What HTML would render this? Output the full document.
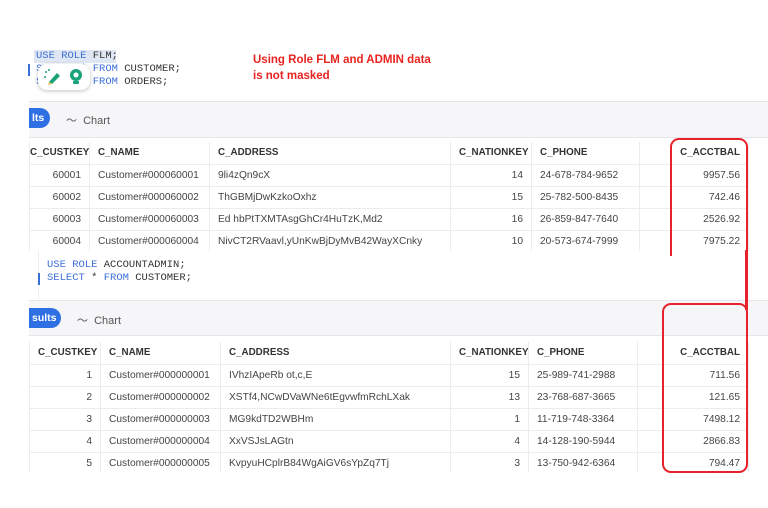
<!DOCTYPE html>
<html><head><meta charset="utf-8"><style>
*{margin:0;padding:0;box-sizing:border-box}
body{width:768px;height:508px;background:#fff;position:relative;overflow:hidden;font-family:"Liberation Sans",sans-serif}
.a{position:absolute}
.sql{font-family:"Liberation Mono",monospace;font-size:10.5px;color:#333;white-space:pre;line-height:13px}
.kw{color:#3b6fd8}
.band{background:#f6f6f8;border-top:1px solid #e6e6ea;border-bottom:1px solid #e6e6ea}
.pill{background:#2f6fe4;color:#fff;font-weight:bold;font-size:10.5px;border-radius:0 10px 10px 0;line-height:20px;padding-left:3px}
.chart{font-size:11px;color:#555}
table{border-collapse:collapse;font-size:10.2px;color:#444;background:#fff;table-layout:fixed}
td,th{border:1px solid #ececef;height:22px;padding:0 8px;white-space:nowrap;overflow:hidden}
th{font-weight:bold;color:#333;text-align:left;font-size:9.8px}
td.r,th.r{text-align:right}
table tr:first-child th{border-top:none}
.red{border:2.5px solid #e8212b;border-radius:9px}
</style></head><body>

<div class="a" style="left:34px;top:50px;width:82px;height:13px;background:#dfe6f3"></div>
<div class="a" style="left:28px;top:64px;width:2px;height:12px;background:#3b6fd8"></div>
<div class="a sql" style="left:36px;top:50px"><span class="kw">USE ROLE</span> FLM;
<span class="kw">SELECT *</span> <span class="kw">FROM</span> CUSTOMER;
<span class="kw">SELECT *</span> <span class="kw">FROM</span> ORDERS;</div>
<div class="a" style="left:38px;top:64px;width:52px;height:26px;background:#fff;border-radius:9px;box-shadow:0 1px 4px rgba(0,0,0,.25)"></div>
<svg class="a" style="left:43px;top:68px" width="20" height="18" viewBox="0 0 20 18"><circle cx="3" cy="4" r="1" fill="#1aa37a"/><circle cx="6" cy="2" r="1" fill="#1aa37a"/><circle cx="2" cy="9" r="1" fill="#1aa37a"/><path d="M6 14 L14 5 L17 8 L9 16 Z" fill="#1aa37a"/><path d="M6 14 L5 17 L9 16Z" fill="#f2c94c"/></svg>
<svg class="a" style="left:68px;top:68px" width="16" height="18" viewBox="0 0 16 18"><circle cx="8" cy="7" r="6" fill="#1aa37a"/><circle cx="8" cy="7" r="2.5" fill="#fff"/><rect x="5" y="13" width="6" height="3" rx="1" fill="#1aa37a"/></svg>
<div class="a" style="left:253px;top:52px;color:#e8231f;font-weight:bold;font-size:11.5px;line-height:16px">Using Role FLM and ADMIN data<br>is not masked</div>

<div class="a band" style="left:29px;top:101px;width:739px;height:37px"></div>
<div class="a pill" style="left:29px;top:108px;width:21px">lts</div>
<div class="a chart" style="left:66px;top:112px">〜&nbsp; Chart</div>

<table class="a" style="left:29px;top:142px;width:719px">
<colgroup><col style="width:60px"><col style="width:120px"><col style="width:241px"><col style="width:81px"><col style="width:108px"><col style="width:109px"></colgroup>
<tr><th style="padding-left:0">C_CUSTKEY</th><th>C_NAME</th><th>C_ADDRESS</th><th class="r">C_NATIONKEY</th><th>C_PHONE</th><th class="r">C_ACCTBAL</th></tr>
<tr><td class="r">60001</td><td>Customer#000060001</td><td>9li4zQn9cX</td><td class="r">14</td><td>24-678-784-9652</td><td class="r">9957.56</td></tr>
<tr><td class="r">60002</td><td>Customer#000060002</td><td>ThGBMjDwKzkoOxhz</td><td class="r">15</td><td>25-782-500-8435</td><td class="r">742.46</td></tr>
<tr><td class="r">60003</td><td>Customer#000060003</td><td>Ed hbPtTXMTAsgGhCr4HuTzK,Md2</td><td class="r">16</td><td>26-859-847-7640</td><td class="r">2526.92</td></tr>
<tr><td class="r">60004</td><td>Customer#000060004</td><td>NivCT2RVaavl,yUnKwBjDyMvB42WayXCnky</td><td class="r">10</td><td>20-573-674-7999</td><td class="r">7975.22</td></tr>
</table>
<div class="a" style="left:0;top:251px;width:768px;height:48px;background:#fff"></div>
<div class="a" style="left:38px;top:251px;width:1px;height:48px;background:#eee"></div>

<div class="a" style="left:38px;top:273px;width:2px;height:12px;background:#3b6fd8"></div>
<div class="a sql" style="left:47px;top:259px"><span class="kw">USE ROLE</span> ACCOUNTADMIN;
<span class="kw">SELECT</span> * <span class="kw">FROM</span> CUSTOMER;</div>

<div class="a band" style="left:29px;top:300px;width:739px;height:36px"></div>
<div class="a pill" style="left:29px;top:308px;width:32px">sults</div>
<div class="a chart" style="left:77px;top:312px">〜&nbsp; Chart</div>

<table class="a" style="left:29px;top:342px;width:719px">
<colgroup><col style="width:71px"><col style="width:120px"><col style="width:230px"><col style="width:78px"><col style="width:109px"><col style="width:111px"></colgroup>
<tr><th>C_CUSTKEY</th><th>C_NAME</th><th>C_ADDRESS</th><th class="r">C_NATIONKEY</th><th>C_PHONE</th><th class="r">C_ACCTBAL</th></tr>
<tr><td class="r">1</td><td>Customer#000000001</td><td>IVhzIApeRb ot,c,E</td><td class="r">15</td><td>25-989-741-2988</td><td class="r">711.56</td></tr>
<tr><td class="r">2</td><td>Customer#000000002</td><td>XSTf4,NCwDVaWNe6tEgvwfmRchLXak</td><td class="r">13</td><td>23-768-687-3665</td><td class="r">121.65</td></tr>
<tr><td class="r">3</td><td>Customer#000000003</td><td>MG9kdTD2WBHm</td><td class="r">1</td><td>11-719-748-3364</td><td class="r">7498.12</td></tr>
<tr><td class="r">4</td><td>Customer#000000004</td><td>XxVSJsLAGtn</td><td class="r">4</td><td>14-128-190-5944</td><td class="r">2866.83</td></tr>
<tr><td class="r">5</td><td>Customer#000000005</td><td>KvpyuHCplrB84WgAiGV6sYpZq7Tj</td><td class="r">3</td><td>13-750-942-6364</td><td class="r">794.47</td></tr>
</table>
<div class="a" style="left:0;top:472px;width:768px;height:36px;background:#fff"></div>

<div class="a red" style="left:670px;top:138px;width:78px;height:118px;border-bottom:none;border-radius:9px 9px 0 0"></div>
<div class="a" style="left:745px;top:250px;width:2.5px;height:60px;background:#e8212b"></div>
<div class="a red" style="left:662px;top:303px;width:86px;height:170px"></div>
</body></html>
